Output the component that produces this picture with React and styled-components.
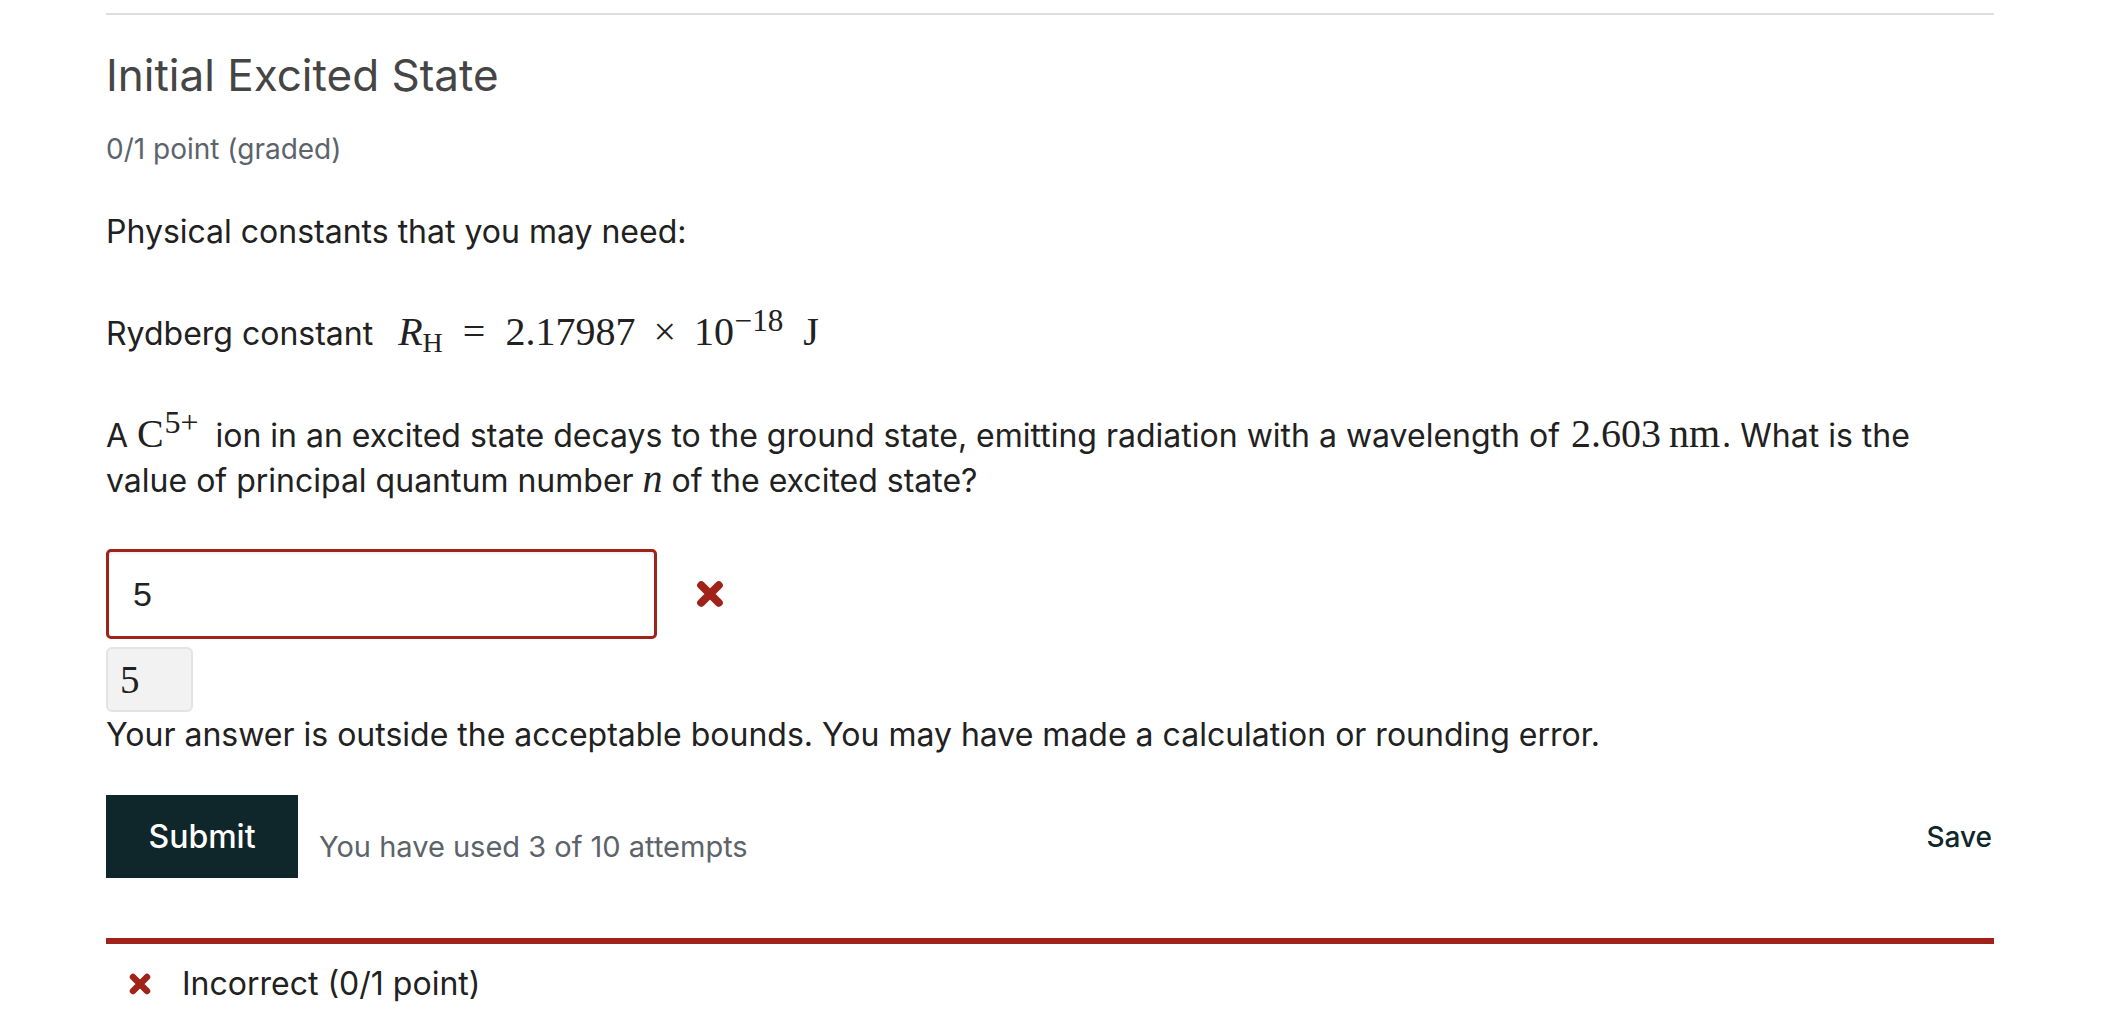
import styled, { createGlobalStyle } from 'styled-components';

const GlobalStyle = createGlobalStyle`
  html, body {
    margin: 0;
    padding: 0;
    background: #ffffff;
  }
  body {
    font-family: Inter, "Noto Sans", "Liberation Sans", sans-serif;
    color: #212121;
  }
`;

const Page = styled.div`
  width: 1888px;
  padding: 13px 0 0 106px;
`;

const Rule = styled.hr`
  margin: 0;
  border: 0;
  border-top: 2px solid #dedede;
`;

const Title = styled.h3`
  margin: 33px 0 0;
  font-size: 44px;
  line-height: 54px;
  font-weight: 400;
  color: #454545;
`;

const Points = styled.div`
  margin-top: 28px;
  font-size: 28px;
  line-height: 39px;
  color: #5c636a;
`;

const Text = styled.p`
  margin: ${(p) => p.$top || 0}px 0 0;
  font-size: 32px;
  line-height: 45px;
  color: #212121;
`;

// math set in a serif face, roughly like KaTeX main
const Math = styled.span`
  font-family: "Liberation Serif", "DejaVu Serif", serif;
  font-size: 40px;
  line-height: 0;
  color: #212121;
  white-space: nowrap;
  margin-left: ${(p) => p.$left || 0}px;
  margin-right: ${(p) => p.$right || 0}px;
`;

const Italic = styled.i`
  font-style: italic;
`;

const Sub = styled.sub`
  font-size: 0.7em;
  line-height: 0;
  vertical-align: -0.25em;
`;

const Sup = styled.sup`
  font-size: ${(p) => p.$size || 0.74}em;
  line-height: 0;
  vertical-align: 0.45em;
  margin-left: 0.02em;
`;

const Op = styled.span`
  margin: 0 ${(p) => p.$space || 0.25}em;
`;

const AnswerRow = styled.div`
  margin-top: 46px;
  display: flex;
  align-items: center;
  gap: 38px;
`;

const AnswerInput = styled.input`
  box-sizing: border-box;
  width: 551px;
  height: 90px;
  padding: 0 24px;
  border: 3px solid #a0231a;
  border-radius: 5px;
  box-shadow: inset 0 2px 3px rgba(0, 0, 0, 0.06);
  font-family: "Liberation Sans", Arial, sans-serif;
  font-size: 34px;
  color: #222;
  outline: none;
`;

const Preview = styled.div`
  box-sizing: border-box;
  margin-top: 8px;
  width: 87px;
  height: 65px;
  padding: 0 0 0 12px;
  display: flex;
  align-items: center;
  background: #f2f2f2;
  border: 2px solid #e3e3e3;
  border-radius: 6px;
  font-family: "Liberation Serif", "DejaVu Serif", serif;
  font-size: 39px;
  color: #212121;
`;

const ActionRow = styled.div`
  margin-top: 38px;
  display: flex;
  align-items: center;
`;

const SubmitButton = styled.button`
  width: 192px;
  height: 83px;
  border: 0;
  border-radius: 0;
  background: #0f272b;
  color: #ffffff;
  font-family: Inter, "Liberation Sans", sans-serif;
  font-size: 32px;
  font-weight: 500;
  cursor: pointer;
`;

const Attempts = styled.span`
  margin: 20px 0 0 21px;
  font-size: 29px;
  color: #5c636a;
`;

const SaveButton = styled.button`
  margin-left: auto;
  padding: 0 2px 0 0;
  border: 0;
  background: none;
  color: #0f272b;
  font-family: Inter, "Liberation Sans", sans-serif;
  font-size: 28px;
  font-weight: 500;
  cursor: pointer;
`;

const Feedback = styled.div`
  margin-top: 60px;
  border-top: 6px solid #a0231a;
  padding: 17px 0 0 22px;
  display: flex;
  align-items: center;
  gap: 30px;
  font-size: 32px;
  line-height: 45px;
  color: #212121;
`;

const Cross = ({ size }) => (
  <svg width={size} height={size} viewBox="0 0 24 24" aria-hidden="true">
    <path
      d="M5 5 L19 19 M19 5 L5 19"
      stroke="#a0231a"
      strokeWidth="6.5"
      strokeLinecap="round"
      fill="none"
    />
  </svg>
);

export default function App() {
  return (
    <>
      <GlobalStyle />
      <Page>
        <Rule />
        <Title>Initial Excited State</Title>
        <Points>0/1 point (graded)</Points>

        <Text $top={40}>Physical constants that you may need:</Text>

        <Text $top={57}>
          Rydberg constant{' '}
          <Math $left={16}>
            <Italic>R</Italic>
            <Sub>H</Sub>
            <Op $space={0.5}>=</Op>2.17987<Op $space={0.45}>×</Op>10
            <Sup $size={0.78}>−18</Sup>
            <span style={{ marginLeft: '0.5em' }}>J</span>
          </Math>
        </Text>

        <Text $top={57}>
          A{' '}
          <Math $right={8}>
            C<Sup $size={0.8}>5+</Sup>
          </Math>{' '}
          ion in an excited state decays to the ground state, emitting radiation with a
          wavelength of <Math $left={2} $right={2}>2.603&thinsp;nm</Math>. What is the
          value of principal quantum number <Math><Italic>n</Italic></Math> of the excited
          state?
        </Text>

        <AnswerRow>
          <AnswerInput defaultValue="5" aria-label="Answer" />
          <Cross size={30} />
        </AnswerRow>
        <Preview>5</Preview>
        <Text>
          Your answer is outside the acceptable bounds. You may have made a calculation or
          rounding error.
        </Text>

        <ActionRow>
          <SubmitButton>Submit</SubmitButton>
          <Attempts>You have used 3 of 10 attempts</Attempts>
          <SaveButton>Save</SaveButton>
        </ActionRow>

        <Feedback>
          <Cross size={24} />
          <span>Incorrect (0/1 point)</span>
        </Feedback>
      </Page>
    </>
  );
}
